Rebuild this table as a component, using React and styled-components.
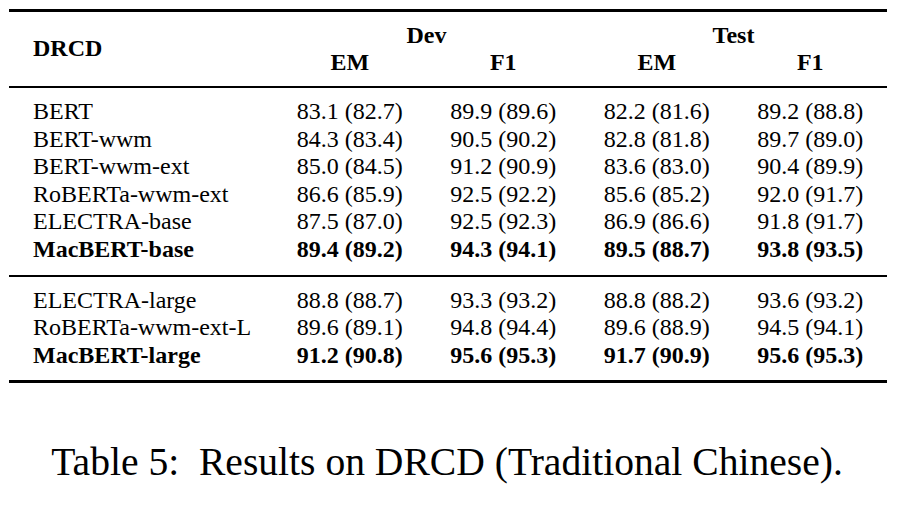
import React from "react";
import styled, { createGlobalStyle } from "styled-components";

const Global = createGlobalStyle`
  html, body { margin: 0; padding: 0; background: #fff; }
  body { font-family: "Liberation Serif", "Times New Roman", serif; color: #000; }
`;

const Page = styled.div`
  width: 897px;
  height: 507px;
  padding: 9px 10px 0 9px;
  box-sizing: border-box;
`;

const Rule = styled.div`
  height: ${(p) => (p.$thick ? 3 : 2)}px;
  background: #000;
`;

const Grid = styled.div`
  display: grid;
  grid-template-columns: 264px repeat(4, 1fr);
  font-size: 24px;
  line-height: 27.6px;
`;

const Header = styled(Grid)`
  grid-template-rows: 27px 27px;
  padding: 10px 0 10px;
  font-weight: bold;
`;

const Corner = styled.div`
  grid-row: 1 / 3;
  grid-column: 1;
  align-self: center;
  padding-left: 24px;
`;

const Group = styled.div`
  grid-row: 1;
  grid-column: ${(p) => p.$col} / span 2;
  text-align: center;
`;

const Sub = styled.div`
  grid-row: 2;
  grid-column: ${(p) => p.$col};
  text-align: center;
`;

const Section = styled.div`
  padding: ${(p) => p.$top}px 0 ${(p) => p.$bottom}px;
`;

const Row = styled(Grid)`
  font-weight: ${(p) => (p.$bold ? "bold" : "normal")};
`;

const Label = styled.div`
  padding-left: 24px;
  white-space: nowrap;
`;

const Cell = styled.div`
  text-align: center;
  white-space: nowrap;
`;

const Caption = styled.div`
  margin-top: 56px;
  padding-right: 2px;
  text-align: center;
  font-size: 39.6px;
  line-height: 46px;
  white-space: nowrap;
`;

const base = [
  ["BERT", "83.1 (82.7)", "89.9 (89.6)", "82.2 (81.6)", "89.2 (88.8)"],
  ["BERT-wwm", "84.3 (83.4)", "90.5 (90.2)", "82.8 (81.8)", "89.7 (89.0)"],
  ["BERT-wwm-ext", "85.0 (84.5)", "91.2 (90.9)", "83.6 (83.0)", "90.4 (89.9)"],
  ["RoBERTa-wwm-ext", "86.6 (85.9)", "92.5 (92.2)", "85.6 (85.2)", "92.0 (91.7)"],
  ["ELECTRA-base", "87.5 (87.0)", "92.5 (92.3)", "86.9 (86.6)", "91.8 (91.7)"],
  ["MacBERT-base", "89.4 (89.2)", "94.3 (94.1)", "89.5 (88.7)", "93.8 (93.5)", true],
];

const large = [
  ["ELECTRA-large", "88.8 (88.7)", "93.3 (93.2)", "88.8 (88.2)", "93.6 (93.2)"],
  ["RoBERTa-wwm-ext-L", "89.6 (89.1)", "94.8 (94.4)", "89.6 (88.9)", "94.5 (94.1)"],
  ["MacBERT-large", "91.2 (90.8)", "95.6 (95.3)", "91.7 (90.9)", "95.6 (95.3)", true],
];

function Rows({ data }) {
  return data.map((r) => (
    <Row key={r[0]} $bold={!!r[5]}>
      <Label>{r[0]}</Label>
      <Cell>{r[1]}</Cell>
      <Cell>{r[2]}</Cell>
      <Cell>{r[3]}</Cell>
      <Cell>{r[4]}</Cell>
    </Row>
  ));
}

export default function App() {
  return (
    <Page>
      <Global />
      <Rule $thick />
      <Header>
        <Corner>DRCD</Corner>
        <Group $col={2}>Dev</Group>
        <Group $col={4}>Test</Group>
        <Sub $col={2}>EM</Sub>
        <Sub $col={3}>F1</Sub>
        <Sub $col={4}>EM</Sub>
        <Sub $col={5}>F1</Sub>
      </Header>
      <Rule />
      <Section $top={10} $bottom={11}>
        <Rows data={base} />
      </Section>
      <Rule />
      <Section $top={10} $bottom={11}>
        <Rows data={large} />
      </Section>
      <Rule $thick />
      <Caption>Table 5:&nbsp; Results on DRCD (Traditional Chinese).</Caption>
    </Page>
  );
}
